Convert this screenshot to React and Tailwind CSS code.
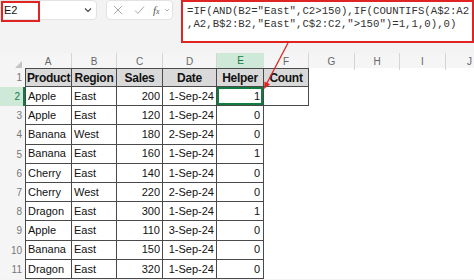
import React from "react";

const rows = [
  ["Apple", "East", "200", "1-Sep-24", "1"],
  ["Apple", "East", "120", "1-Sep-24", "0"],
  ["Banana", "West", "180", "2-Sep-24", "0"],
  ["Banana", "East", "160", "1-Sep-24", "1"],
  ["Cherry", "East", "140", "1-Sep-24", "0"],
  ["Cherry", "West", "220", "2-Sep-24", "0"],
  ["Dragon", "East", "300", "1-Sep-24", "1"],
  ["Apple", "East", "110", "3-Sep-24", "0"],
  ["Banana", "East", "150", "1-Sep-24", "0"],
  ["Dragon", "East", "320", "1-Sep-24", "0"],
];

const letters = ["A", "B", "C", "D", "E", "F", "G", "H", "I", "J"];
const grid = "grid grid-cols-[25px_47px_45px_46px_54px_47px_45px_46px_45px_46px_48px]";
const cell = "border-r border-b border-[#4a4a4a] flex items-center overflow-hidden whitespace-nowrap";

const App = () => (
  <div
    className="relative w-[474px] h-[280px] overflow-hidden bg-[#f3f3f3] text-[#111]"
    style={{ fontFamily: '"Liberation Sans", Arial, sans-serif' }}
  >
    {/* top bar */}
    <div className="flex h-[53px]">
      <div className="flex w-[181px] h-[21px] items-start">
        <div className="relative flex items-center w-[97px] h-[20px] bg-white rounded-r-[4px] border border-[#e2e2e2]">
          <div className="absolute left-0 top-0 w-[39px] h-[21px] border-2 border-[#e02424]" />
          <span className="pl-[3px] text-[11px]">E2</span>
          <svg className="ml-auto mr-[4px]" width="8" height="6" viewBox="0 0 8 6">
            <path d="M1 1.5 L4 4.5 L7 1.5" fill="none" stroke="#444" strokeWidth="1.1" />
          </svg>
        </div>
        <div className="ml-[9px] flex items-center w-[67px] h-[20px] bg-white rounded-[4px] border border-[#e2e2e2] text-[#999]">
          <svg className="ml-[6px]" width="10" height="10" viewBox="0 0 10 10">
            <path d="M1 1 L9 9 M9 1 L1 9" stroke="#a8a8a8" strokeWidth="1" />
          </svg>
          <svg className="ml-[11px]" width="11" height="10" viewBox="0 0 11 10">
            <path d="M1 5.5 L4 8.5 L10 1.5" fill="none" stroke="#a8a8a8" strokeWidth="1" />
          </svg>
          <span className="ml-[8px] italic text-[11px] text-[#555]" style={{ fontFamily: '"Liberation Serif", serif' }}>
            f<span className="text-[8px]">x</span>
          </span>
          <svg className="ml-[4px]" width="6" height="4" viewBox="0 0 6 4">
            <path d="M1 1 L3 3 L5 1" fill="none" stroke="#aaa" strokeWidth="0.9" />
          </svg>
        </div>
      </div>
      <div
        className="w-[293px] h-[43px] bg-white border-2 border-[#e02424] pl-[4px] pt-[3px] text-[10.7px] leading-[13px] text-[#333]"
        style={{ fontFamily: '"Liberation Mono", monospace' }}
      >
        <div className="whitespace-pre">=IF(AND(B2="East",C2&gt;150),IF(COUNTIFS(A$2:A2</div>
        <div className="whitespace-pre">,A2,B$2:B2,"East",C$2:C2,"&gt;150")=1,1,0),0)</div>
      </div>
    </div>

    {/* column headers */}
    <div className={`${grid} h-[15px] bg-[#f5f5f5] text-[10px] text-[#666]`}>
      <div className="relative">
        <svg className="absolute right-[3px] bottom-[2px]" width="7" height="7" viewBox="0 0 7 7">
          <path d="M7 0 L7 7 L0 7 Z" fill="#c4c4c4" />
        </svg>
      </div>
      {letters.map((l) => (
        <div
          key={l}
          className={
            l === "E"
              ? "flex items-center justify-center bg-[#cfe9d8] border-b-2 border-[#107c41] text-[#107c41]"
              : "flex items-center justify-center border-r border-[#d4d4d4]"
          }
        >
          {l}
        </div>
      ))}
    </div>

    {/* header row */}
    <div className={`${grid} h-[19px] bg-white`}>
      <div className="flex items-center justify-end pr-[3px] text-[10px] text-[#777] bg-[#f5f5f5]">1</div>
      {["Product", "Region", "Sales", "Date", "Helper", "Count"].map((h, i) => (
        <div
          key={h}
          className={`${cell} border-t justify-center bg-[#d9d9d9] font-bold text-[12px] tracking-[-0.3px] ${i === 0 ? "border-l" : ""}`}
        >
          {h}
        </div>
      ))}
    </div>

    {/* data rows */}
    {rows.map((r, ri) => (
      <div key={ri} className={`${grid} h-[19.2px] bg-white text-[11px]`}>
        <div
          className={
            ri === 0
              ? "flex items-center justify-end pr-[3px] text-[10px] text-[#107c41] bg-[#cfe9d8] border-r-2 border-[#107c41]"
              : "flex items-center justify-end pr-[3px] text-[10px] text-[#777] bg-[#f5f5f5]"
          }
        >
          {ri + 2}
        </div>
        <div className={`${cell} border-l pl-[2px]`}>{r[0]}</div>
        <div className={`${cell} pl-[2px]`}>{r[1]}</div>
        <div className={`${cell} justify-end pr-[2px]`}>{r[2]}</div>
        <div className={`${cell} justify-end pr-[2px]`}>{r[3]}</div>
        <div
          className={`${cell} justify-end pr-[3px] ${ri === 0 ? "shadow-[inset_0_0_0_2px_#107c41]" : ""}`}
        >
          {r[4]}
        </div>
        {ri === 0 ? <div className={cell} /> : <div />}
      </div>
    ))}

    {/* red arrow */}
    <svg className="absolute left-0 top-0 pointer-events-none" width="474" height="280" viewBox="0 0 474 280">
      <line x1="288" y1="43" x2="267" y2="83" stroke="#e02424" strokeWidth="1.3" />
      <polygon points="264,89 270.1,84.2 264.5,81.4" fill="#e02424" />
    </svg>
  </div>
);

export default App;
